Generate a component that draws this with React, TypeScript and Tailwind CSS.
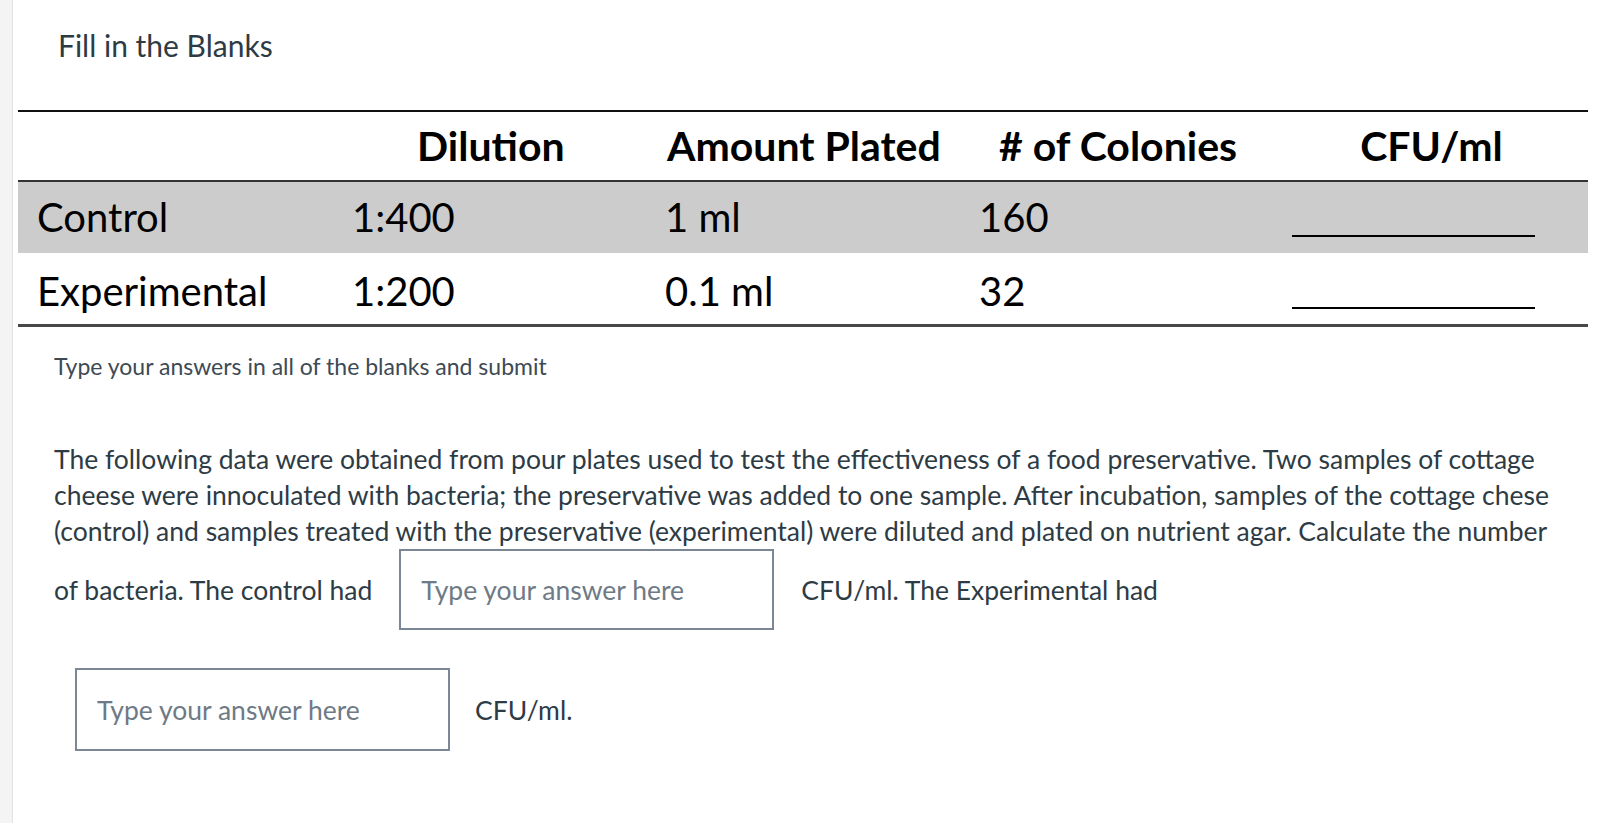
import React from 'react';

const rows = [
  { name: 'Control', dilution: '1:400', amount: '1 ml', colonies: '160', shade: true },
  { name: 'Experimental', dilution: '1:200', amount: '0.1 ml', colonies: '32', shade: false },
];

export default function App() {
  return (
    <div className="flex min-h-[823px] bg-white">
      {/* left gutter */}
      <div className="w-[13px] shrink-0 bg-[#f4f4f4] border-r border-[#e2e2e2]" />

      <div className="flex-1 font-['Lato',sans-serif] text-[#2d3b45]">
        <div className="pl-[45px] pt-[27px] text-[30px] leading-[36px]">Fill in the Blanks</div>

        {/* data table */}
        <div className="ml-[5px] mt-[47px] w-[1570px] border-t-2 border-[#111] border-b-[3px] border-b-[#484848] text-black">
          <div className="flex h-[70px] items-center border-b-2 border-[#333] text-[41px] font-bold">
            <div className="w-[315px]" />
            <div className="w-[314px] pl-[84px]">Dilution</div>
            <div className="w-[314px] pl-[20px]">Amount Plated</div>
            <div className="w-[314px] pl-[38px]">{'# of Colonies'}</div>
            <div className="w-[313px] text-center">CFU/ml</div>
          </div>
          {rows.map(r => (
            <div key={r.name} className={`flex h-[71px] text-[40px] ${r.shade ? 'bg-[#cccccc] pb-[2px]' : 'pt-[4px]'}`}>
              <div className="flex w-[315px] items-center pl-[19px]">{r.name}</div>
              <div className="flex w-[314px] items-center pl-[19px]">{r.dilution}</div>
              <div className="flex w-[314px] items-center pl-[18px]">{r.amount}</div>
              <div className="flex w-[314px] items-center pl-[18px]">{r.colonies}</div>
              <div className={`w-[313px] ${r.shade ? 'pt-[53px]' : 'pt-[50px]'}`}>
                <div className="ml-[17px] h-[2px] w-[243px] bg-black" />
              </div>
            </div>
          ))}
        </div>

        <div className="pl-[41px] mt-[25px] text-[23px] leading-[28px] text-[#3d4a55]">
          Type your answers in all of the blanks and submit
        </div>

        <div className="pl-[41px] mt-[61px] text-[26.5px] leading-[36px]">
          <p className="whitespace-nowrap">
            The following data were obtained from pour plates used to test the effectiveness of a food preservative. Two samples of cottage
            <br />
            cheese were innoculated with bacteria; the preservative was added to one sample. After incubation, samples of the cottage chese
            <br />
            (control) and samples treated with the preservative (experimental) were diluted and plated on nutrient agar. Calculate the number
          </p>
          <div className="flex items-center">
            <span>of bacteria. The control had</span>
            <input
              type="text"
              placeholder="Type your answer here"
              className="ml-[27px] h-[81px] w-[375px] border-2 border-[#7b8794] px-[20px] text-[26.5px] placeholder:text-[#6e7a85] outline-none"
            />
            <span className="ml-[27px]">CFU/ml. The Experimental had</span>
          </div>
          <div className="mt-[38px] flex items-center">
            <input
              type="text"
              placeholder="Type your answer here"
              className="ml-[21px] h-[83px] w-[375px] border-2 border-[#7b8794] px-[20px] text-[26.5px] placeholder:text-[#6e7a85] outline-none"
            />
            <span className="ml-[25px]">CFU/ml.</span>
          </div>
        </div>
      </div>
    </div>
  );
}
